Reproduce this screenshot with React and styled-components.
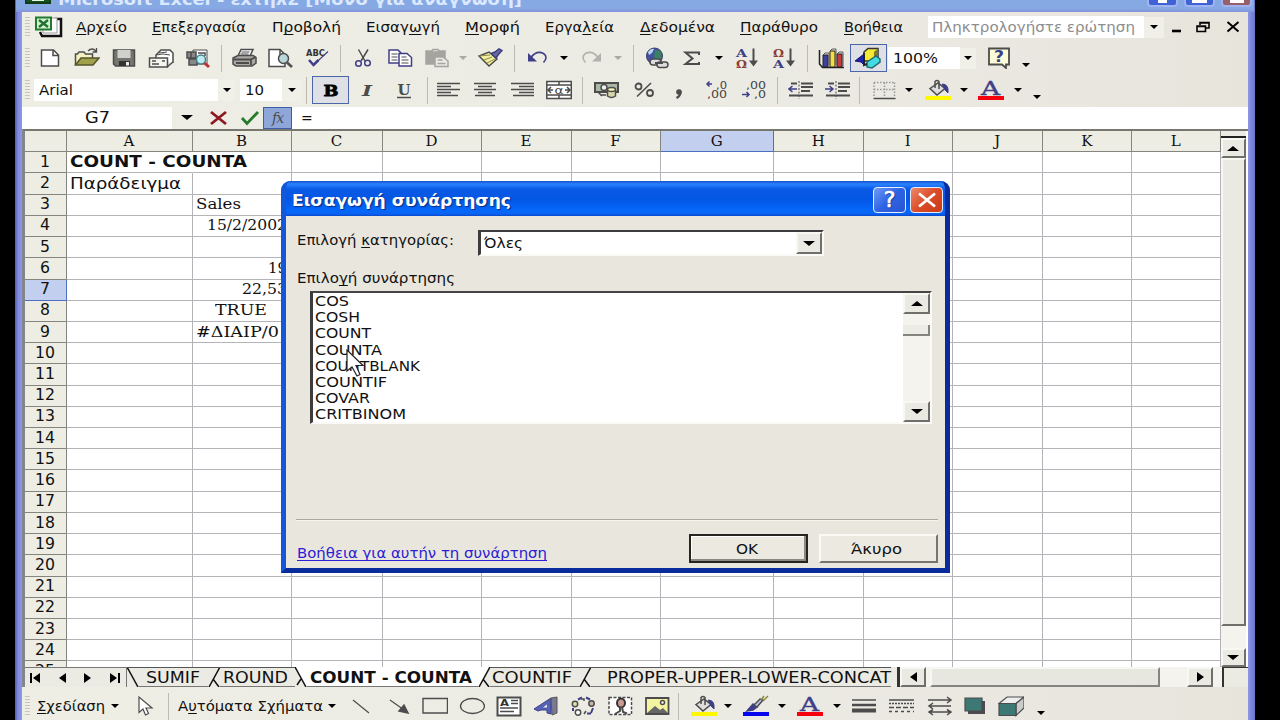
import React, { useLayoutEffect, useRef, useState } from "react";
import styled, { createGlobalStyle } from "styled-components";

const color = {
  face: "#ecebe3",
  faceDark: "#e7e4dc",
  frame: "#7f8cdc",
  ink: "#111",
  grid: "#b4b4b8",
  headLine: "#85857f",
  selected: "#c3cfee",
  selectedLine: "#4c6fc0",
  icon: "#4c4c4c",
  navy: "#3f3f88",
};

const font = {
  ui: `"DejaVu Sans", Verdana, sans-serif`,
  cell: `"DejaVu Serif", serif`,
};

const GlobalStyle = createGlobalStyle`
  body {
    margin: 0;
    background: #000;
    overflow: hidden;
  }
  * {
    box-sizing: border-box;
  }
  u {
    text-decoration-skip-ink: none;
    text-underline-offset: 2px;
  }
`;

/* Stretches a label horizontally so that it fills the given width. */
const FitText = ({ w, children }) => {
  const ref = useRef(null);
  const [scale, setScale] = useState(1);

  useLayoutEffect(() => {
    setScale(w / ref.current.getBoundingClientRect().width);
  }, [w]);

  return (
    <FitBox $w={w}>
      <FitInner ref={ref} style={{ transform: `scaleX(${scale})` }}>
        {children}
      </FitInner>
    </FitBox>
  );
};

const FitBox = styled.span`
  display: inline-block;
  flex: none;
  width: ${(props) => props.$w}px;
  white-space: nowrap;
`;

const FitInner = styled.span`
  display: inline-block;
  transform-origin: 0 50%;
`;

/* ---------- icons ---------- */

const Svg = styled.svg`
  display: block;
  flex: none;
  fill: none;
  stroke: ${color.icon};
  stroke-width: 1.5;
`;

const Icon = ({ children }) => (
  <Svg width="26" height="22" viewBox="0 0 26 22">
    {children}
  </Svg>
);

const glyph = (x, y, size, fill, text, extra) => (
  <text
    x={x}
    y={y}
    fontSize={size}
    fill={fill}
    stroke="none"
    fontFamily={`"DejaVu Sans", sans-serif`}
    lengthAdjust="spacingAndGlyphs"
    {...extra}
  >
    {text}
  </text>
);

const serif = { fontFamily: `"DejaVu Serif", serif` };
const serifBold = { ...serif, fontWeight: 700 };

const bucket = (
  <>
    <path d="M5 9.500 13 4l7 5.500-8 6.500z" fill="#ddd" />
    <path d="M10 9V2.500q2-2 4 0V10" />
    <path d="M17 5q7 0 6 9l-3-3z" fill={color.navy} stroke={color.navy} strokeWidth="1" />
  </>
);

const ICONS = {
  newFile: (
    <Icon>
      <path d="M4.500 3h12l5 5v11h-17z" fill="#fff" />
      <path d="M16 3v5.500h5.500" />
    </Icon>
  ),
  open: (
    <Icon>
      <path d="M1.500 18V7h2l1.500-2h5l1.500 2h7v4" fill="#f4f0c0" />
      <path d="M1.500 18 7 11h18l-6 7z" fill="#a3a04c" stroke="#55552c" />
      <path d="M14 4q4-4 8 0M22.500 1v4h-4" strokeWidth="1.300" />
    </Icon>
  ),
  save: (
    <Icon>
      <path d="M2.500 3h21v16h-19l-2-2z" fill="#757570" />
      <path d="M6.500 3h13v8h-13z" fill="#d0d0cc" stroke="none" />
      <path d="M8 14h11v5H8z" fill="#333" stroke="none" />
      <path d="M15 15h3v3.500h-3z" fill="#eee" stroke="none" />
    </Icon>
  ),
  mail: (
    <Icon>
      <path d="M8 11V8l5-5h9l3 3v10" fill="#fff" />
      <path d="M8 8q7-2 14 0M11 6l8-1" strokeWidth="1" />
      <path d="M1.500 11h18v9h-18z" fill="#f6f6ee" />
      <path d="M4 14h4M4 17h7M14 14h3M19 20l6-5" />
    </Icon>
  ),
  search: (
    <Icon>
      <path d="M8 3h14v14H8z" fill="#fff" strokeWidth="1" />
      <path d="M2 5h9v6H2zM4 12h8v6H4z" fill="#888" />
      <path d="M6 5v6M13 6h7v3" />
      <circle cx="16" cy="12.500" r="4.500" fill="#b9eef3" stroke="#4d7f8c" />
      <path d="m19.500 16 4.500 4" stroke="#c03030" strokeWidth="3" />
    </Icon>
  ),
  print: (
    <Icon>
      <path d="M7 9 10 2.500h12L19 9z" fill="#fff" />
      <path d="M10.500 5h8M9.500 7h8" strokeWidth="1" />
      <path d="M2 11 7 8.500h15l3 2V16l-4 3H5l-3-2z" fill="#aaa9a4" />
      <path d="M2 12.500h18l4.500-2.500M5 16h13M20 12v6" strokeWidth="1.800" />
    </Icon>
  ),
  preview: (
    <Icon>
      <path d="M2 2.500h11l5 5V19.500H2z" fill="#fff" />
      <path d="M13 2.500V8h5" />
      <circle cx="16.500" cy="11.500" r="5" fill="#bbd6da" />
      <path d="m20 15.500 5 4.500" stroke="#555" strokeWidth="2.800" />
    </Icon>
  ),
  spell: (
    <Icon>
      {glyph(2, 8.5, 8, "#333", "ABC", { fontWeight: 700, textLength: 19 })}
      <path d="m5.500 13 4 5L24 4.500" stroke={color.navy} strokeWidth="1.200" />
      <path d="m5 13 4.500 5 5-5" stroke={color.navy} strokeWidth="2.500" />
    </Icon>
  ),
  cut: (
    <Icon>
      <path d="M8.500 2.500 15 14M18 2.500 11 14" />
      <circle cx="8.500" cy="16.500" r="2.800" stroke={color.navy} />
      <circle cx="17.500" cy="16" r="2.800" stroke={color.navy} />
    </Icon>
  ),
  copy: (
    <Icon>
      <path d="M2 3h9l3 3v10H2z" fill="#fff" stroke={color.navy} />
      <path d="M4.500 7h6M4.500 10h6M4.500 13h6" strokeWidth="1.200" />
      <path d="M12 6.500h8l4.500 4V19H12z" fill="#fff" stroke={color.navy} />
      <path d="M14.500 10h5M14.500 13h7M14.500 16h7" strokeWidth="1.200" />
    </Icon>
  ),
  paste: (
    <Icon>
      <path d="M2 4h19v13H2z" fill="#a5a49e" stroke="#a5a49e" />
      <path d="M7 5 9 2.500h5L16 5z" fill="#ddd" stroke="#a5a49e" />
      <path d="M11 10h8l5 4v5.500H11z" fill="#eceae4" stroke="#a5a49e" />
      <path d="M13.500 13h5M13.500 16.500h8" stroke="#a5a49e" />
    </Icon>
  ),
  brush: (
    <Icon>
      <path d="m2 9 10 10 8-7-8-7z" fill="#f3f19a" />
      <path d="m2 9 11-1M7 13l8-3M10 16l8-4" strokeWidth="1" stroke="#8c8a50" />
      <path d="m14 6.500 5 4.500 2-3 4-4.500-3-1.500-4 3z" fill="#6a6a98" stroke={color.navy} />
    </Icon>
  ),
  undo: (
    <Icon>
      <path d="M5.500 11q6-8 13-4.500 5 3.500 0 9" stroke={color.navy} strokeWidth="1.600" />
      <path d="M3 6v8.500h9z" fill={color.navy} stroke="none" />
    </Icon>
  ),
  redo: (
    <Icon>
      <path d="M20.500 11q-6-8-13-4.500-5 3.500 0 9" stroke="#b2b1ab" strokeWidth="1.600" />
      <path d="M23 6v8.500h-9z" fill="#b2b1ab" stroke="none" />
    </Icon>
  ),
  link: (
    <Icon>
      <circle cx="11.500" cy="9" r="8" fill="#4353a2" stroke="#39396b" strokeWidth="1" />
      <path d="m12 3 6 1 1 7-4 2-4-3z" fill="#3c8064" stroke="none" />
      <path d="M5 5q3-4 6-3l-2 4-3 2z" fill="#b8dce9" stroke="none" />
      <rect x="7" y="12" width="11" height="6" rx="3" fill="#ddd" />
      <rect x="14" y="15" width="11" height="5.500" rx="2.700" fill="#ddd" />
      <path d="M12 16h8" strokeWidth="2" />
    </Icon>
  ),
  sum: (
    <Icon>
      <path d="M20 8V5.500H6.500l7 6-7 5.500H20V15" strokeWidth="2" />
    </Icon>
  ),
  sortAsc: (
    <Icon>
      {glyph(2, 10, 11, color.navy, "Α", { ...serifBold, textLength: 11 })}
      {glyph(2, 20.5, 11, "#8d3d38", "Ω", { ...serifBold, textLength: 11 })}
      <path d="M19.500 1.500v15" strokeWidth="2" />
      <path d="M15 13.500h9l-4.500 6z" fill={color.icon} stroke="none" />
    </Icon>
  ),
  sortDesc: (
    <Icon>
      {glyph(2, 10, 11, "#8d3d38", "Ω", { ...serifBold, textLength: 11 })}
      {glyph(2, 20.5, 11, color.navy, "Α", { ...serifBold, textLength: 11 })}
      <path d="M19.500 1.500v15" strokeWidth="2" />
      <path d="M15 13.500h9l-4.500 6z" fill={color.icon} stroke="none" />
    </Icon>
  ),
  chart: (
    <Icon>
      <path d="M1.500 3v14l3 3.500H26" stroke="#222" />
      <path d="M5 8h5v12H5z" fill="#3f3fa2" stroke="#222" strokeWidth="1" />
      <path d="M12 4h5v16h-5z" fill="#f5df46" stroke="#222" strokeWidth="1" />
      <path d="M19 7h5v13h-5z" fill="#c93c40" stroke="#222" strokeWidth="1" />
      <path d="m5 8 2-2h4v12M12 4l2-2h4v16M19 7l2-2h4v14" stroke="#555" strokeWidth="1" />
    </Icon>
  ),
  shapes: (
    <Icon>
      <path d="M9 5 13 1.500h10V11l-4 3H9z" fill="#f4e934" stroke="#333" />
      <path d="M19 14V5l4-3.500V11z" fill="#7e7a25" stroke="none" />
      <path d="M0 14 9 7v11l-3-3z" fill="#1c23b5" stroke="#1a1a60" strokeWidth="1" />
      <path d="m12 15 9-6 4 3v3l-8 6-5-1z" fill="#43dbe2" stroke="#226a70" />
      <path d="M9 6v12l3-1" stroke="#222" strokeWidth="2" />
    </Icon>
  ),
  help: (
    <Icon>
      <path d="M3 1.500h20v16h-3v3.500l-4-3.500H3z" fill="#fdfcd8" strokeWidth="1.800" />
      {glyph(8, 15, 15, color.navy, "?", { fontWeight: 700, textLength: 10 })}
    </Icon>
  ),
  bold: (
    <Icon>
      {glyph(5.5, 16.5, 15, "#000", "B", { ...serifBold, textLength: 15, stroke: "#000", strokeWidth: 0.8 })}
    </Icon>
  ),
  italic: <Icon>{glyph(7, 16.5, 15, color.icon, "I", { ...serifBold, fontStyle: "italic", textLength: 10 })}</Icon>,
  underline: (
    <Icon>
      {glyph(6.5, 15.5, 14, color.icon, "U", { ...serifBold, textLength: 13 })}
      <path d="M6 18.500h14" />
    </Icon>
  ),
  left: <Icon><path d="M2 4.500h23M2 7.500h14M2 10.500h23M2 13.500h14M2 16.500h21" /></Icon>,
  center: <Icon><path d="M2 4.500h22M6 7.500h14M2 10.500h22M6 13.500h14M3 16.500h20" /></Icon>,
  right: <Icon><path d="M2 4.500h23M10 7.500h15M2 10.500h23M10 13.500h15M4 16.500h21" /></Icon>,
  merge: (
    <Icon>
      <path d="M.800 2.500h24.500v17H.800zM.800 6h24.500M.800 16h24.500M13 2v4M13 16v4" fill="#fff" />
      <path d="M7 11H2m3-3-3 3 3 3M19 11h5m-3-3 3 3-3 3" />
      {glyph(8.5, 14.5, 11, "#444", "α", { textLength: 9 })}
    </Icon>
  ),
  currency: (
    <Icon>
      <path d="M2 4h23v9H2z" fill="#aab8a5" strokeWidth="2" />
      <circle cx="11" cy="8.500" r="3" fill="#eee" />
      <path d="M14.500 11v6q4 3 8 0v-6M7 16h6M5 13l4 4" fill="#d8d7a8" />
      <ellipse cx="18.500" cy="10.500" rx="4" ry="2" fill="#f5f3b0" />
    </Icon>
  ),
  percent: (
    <Icon>
      <circle cx="7.500" cy="7.500" r="3" strokeWidth="1.800" />
      <circle cx="19" cy="14" r="3" strokeWidth="1.800" />
      <path d="M20 4 6 17.500" strokeWidth="1.600" />
    </Icon>
  ),
  comma: (
    <Icon>
      <circle cx="13" cy="13" r="2.800" fill={color.icon} stroke="none" />
      <path d="M14.500 13q0 4-4 6" strokeWidth="2.300" />
    </Icon>
  ),
  incDecimal: (
    <Icon>
      <path d="M8 5H3m2.500-2.500L3 5l2.500 2.500" stroke={color.navy} />
      {glyph(12, 9.5, 10, "#444", ",0", { textLength: 11 })}
      {glyph(3, 19, 10, "#444", ",00", { textLength: 20 })}
    </Icon>
  ),
  decDecimal: (
    <Icon>
      {glyph(5, 9.5, 10, "#444", ",00", { textLength: 20 })}
      <path d="M1 15.500h7M5.500 13 8 15.500 5.500 18" stroke={color.navy} />
      {glyph(13, 19, 10, "#444", ",0", { textLength: 12 })}
    </Icon>
  ),
  outdent: (
    <Icon>
      <path d="M13 4.500h12M13 8h12M13 12h9M1 16.500h24M3 4.500h6" strokeWidth="1.800" />
      <path d="M9 10H1m3.500-3L1 10l3.500 3" stroke={color.navy} />
      <path d="M11 2v18" strokeDasharray="2 1.500" strokeWidth="1" />
    </Icon>
  ),
  indent: (
    <Icon>
      <path d="M13 4.500h12M13 8h12M13 12h9M1 16.500h24M3 4.500h6" strokeWidth="1.800" />
      <path d="M0 10h8M4.500 7 8 10l-3.500 3" stroke={color.navy} />
      <path d="M11 2v18" strokeDasharray="2 1.500" strokeWidth="1" />
    </Icon>
  ),
  borders: (
    <Icon>
      <path
        d="M3 3.500h21M3 10.500h21M3 3.500v15M13.500 3.500v15M23.500 3.500v15"
        stroke="#999"
        strokeDasharray="1.500 1.500"
      />
      <path d="M2.500 19.500h22" />
    </Icon>
  ),
  fill: (
    <Icon>
      {bucket}
      <path d="M0 17h26v4H0z" fill="#fdf800" stroke="none" />
    </Icon>
  ),
  fontColor: (
    <Icon>
      {glyph(3, 15.5, 18, color.navy, "A", { ...serif, textLength: 19, stroke: color.navy, strokeWidth: 0.4 })}
      <path d="M0 17h26v4H0z" fill="#f5000c" stroke="none" />
    </Icon>
  ),
  lineColor: (
    <Icon>
      <path d="m4 16 6-7 4 3-4 3z" fill={color.navy} stroke={color.navy} />
      <path d="m11 10 6-6 3 1-6 7z" fill="#bbc3e8" />
      <path d="m18 5 3-4M20 6l5-5" stroke="#8c8a40" />
      <path d="M0 17h26v4H0z" fill="#0505ee" stroke="none" />
    </Icon>
  ),
  pointer: (
    <Icon>
      <path d="M7 2v15.500l4-3.500 2.500 6 3-1.500-2.500-5.500h6z" fill="#fff" strokeWidth="1.200" />
    </Icon>
  ),
  line: <Icon><path d="m5 5 16 13" strokeWidth="1.200" /></Icon>,
  arrow: (
    <Icon>
      <path d="m4 5 12 8.500" strokeWidth="1.200" />
      <path d="m22 18-9-2 5-6z" fill={color.icon} />
    </Icon>
  ),
  rect: <Icon><path d="M1 3.500h24.500v14.500H1z" strokeWidth="1.400" /></Icon>,
  ellipse: <Icon><ellipse cx="13.500" cy="11" rx="12" ry="7.500" strokeWidth="1.300" /></Icon>,
  textbox: (
    <Icon>
      <path d="M1.500 2.500h23v18h-23z" fill="#fff" strokeWidth="2" />
      {glyph(4, 11, 9, "#333", "A", { fontWeight: 700, textLength: 9 })}
      <path d="M15 5.500h7M15 8.500h7M4 13h18M4 16.500h14" strokeWidth="1.300" />
    </Icon>
  ),
  wordart: (
    <Icon>
      <path d="M1 14 18 3v16l-4-1v-3l-6 0-3 1z" fill="#5362b5" stroke={color.navy} strokeWidth="1" />
      <path d="m18 3 6-1V18l-5 2z" fill="#777a90" stroke="#555" strokeWidth="1" />
      <path d="m10 12.500 4-3v3z" fill={color.face} stroke="none" />
    </Icon>
  ),
  diagram: (
    <Icon>
      <circle cx="5" cy="9" r="2.700" fill="#e4e3a7" />
      <circle cx="21.500" cy="8.500" r="2.700" fill="#c8b3a2" />
      <circle cx="8" cy="17.500" r="2.700" fill="#fff" />
      <path d="M8 4.500 12 2.500M16 2.500l4 2M23 13l-2 5M17 18.500h4M3 13v3" stroke={color.navy} strokeWidth="2" />
      <path d="M11 4h3v2M16 16l-2 3" />
    </Icon>
  ),
  clip: (
    <Icon>
      <path d="M2 2.500h22.500v17H2z" fill="#fff" strokeDasharray="3 1.500" />
      <ellipse cx="14" cy="8" rx="4" ry="4.500" fill="#c99a91" stroke="#333" strokeWidth="2" />
      <path d="M13 12v4l-5 3M15 12l1 5 4 1.500" strokeWidth="2" />
    </Icon>
  ),
  image: (
    <Icon>
      <path d="M2 3h22.500v16H2z" fill="#f3f3a2" strokeWidth="1.800" />
      <path d="m3 18 8-7 5 4 3-2 5 5z" fill="#666" stroke="none" />
      <circle cx="18.500" cy="7.500" r="2" fill="#fff" />
    </Icon>
  ),
  lineStyle: (
    <Icon>
      <path d="M1 5h24" />
      <path d="M1 10h24" strokeWidth="2.500" />
      <path d="M1 15.500h24" strokeWidth="4" />
    </Icon>
  ),
  dashStyle: (
    <Icon>
      <path d="M1 5h25" />
      <path d="M1 8.500h25" strokeDasharray="2 1" />
      <path d="M1 12.500h25" strokeDasharray="5 2" />
      <path d="M1 16.500h25" strokeDasharray="3 3" />
    </Icon>
  ),
  arrowStyle: (
    <Icon>
      <path d="M1 5h23m-4-3 4 3-4 3M24 11H2m4-3-4 3 4 3M2 17h22M6 14.500 2 17l4 3M20 14.500l4 2.500-4 3" />
    </Icon>
  ),
  shadow: (
    <Icon>
      <path d="M6 6h17v13H6z" fill="#4b4b50" stroke="none" />
      <path d="M3 3h17v13H3z" fill="#3d7874" strokeWidth="1.200" />
    </Icon>
  ),
  cube: (
    <Icon>
      <path d="M1 8.500 9 2h17l-8 6.500z" fill="#eee" strokeWidth="1.200" />
      <path d="m18 8.500 8-6.500v11l-8 7.500z" fill="#c8cccb" strokeWidth="1.200" />
      <path d="M1 8.500H18v12H1z" fill="#3d7874" strokeWidth="1.200" />
    </Icon>
  ),
};

const Caret = styled.span`
  flex: none;
  width: 0;
  height: 0;
  border: ${(props) => (props.$big ? 6 : 4.5)}px solid transparent;
  border-bottom: none;
  border-top: ${(props) => (props.$big ? 5.5 : 4.5)}px solid ${(props) => (props.$muted ? "#aaa9a2" : "#000")};
  transform: rotate(${(props) => (props.$up ? 180 : 0)}deg);
`;

const SideCaret = styled.span`
  flex: none;
  width: 0;
  height: 0;
  border: 5px solid transparent;
  border-left-width: ${(props) => (props.$left ? 0 : 7)}px;
  border-right-width: ${(props) => (props.$left ? 7 : 0)}px;
  border-left-color: #000;
  border-right-color: #000;
`;

/* ---------- window ---------- */

const Desktop = styled.div`
  width: 1280px;
  height: 720px;
  padding: 0 25px 0 15px;
  overflow: hidden;
  background: #000;
  font-family: ${font.ui};
  font-size: 14px;
  color: ${color.ink};
`;

const Window = styled.div`
  position: relative;
  display: flex;
  flex-direction: column;
  height: 720px;
  padding: 0 7px;
  background: linear-gradient(90deg, #5358ad 0, ${color.frame} 3px, #8b97e8 7px, #8b97e8 1233px, #6d74c8 1240px);
`;

const TitleBar = styled.div`
  display: flex;
  align-items: flex-end;
  flex: none;
  height: 12px;
  margin: 0 -6px;
  padding: 0 2px 0 9px;
  background: linear-gradient(#86a9e4 70%, #8591da);
  color: #dce8ff;
  font-weight: 700;
  font-size: 15px;
`;

const AppTitle = styled.div`
  flex: 1;
  height: 21px;
  padding-left: 7px;
  line-height: 18px;
`;

const AppBadge = styled.div`
  width: 26px;
  height: 12px;
  background: #14551d;
  border: 2px solid #123d18;
  border-top: none;
  margin-bottom: 8px;
`;

const AppBadgeMark = styled.div`
  width: 12px;
  height: 9px;
  margin-left: 5px;
  border-bottom: 3px solid #e8f4e8;
`;

const WindowButton = styled.div`
  width: 31px;
  height: 20px;
  margin: 0 0 5px 6px;
  border: 2px solid #9fb4f0;
  border-radius: 4px;
  display: flex;
  align-items: flex-end;
  justify-content: center;
  padding-bottom: 2px;
  background: ${(props) => (props.$close ? "#985f68" : "#3f63d6")};
`;

const WindowMark = styled.div`
  width: ${(props) => props.$w}px;
  height: 3px;
  background: #fff;
`;

const Bar = styled.div`
  display: flex;
  align-items: center;
  flex: none;
  height: ${(props) => props.$h}px;
  background: linear-gradient(90deg, #efeee5, ${color.face} 60%, ${color.faceDark});
`;

const Grip = styled.div`
  flex: none;
  width: 5px;
  height: 21px;
  margin: 0 ${(props) => props.$after}px 0 3px;
  background: repeating-linear-gradient(#c6c5bd 0 1px, transparent 1px 3px);
`;

const Slot = styled.div`
  display: flex;
  flex: none;
  align-items: center;
  justify-content: center;
  width: ${(props) => props.$w}px;
  height: 26px;
  padding-top: ${(props) => props.$drop || 0}px;
`;

const Separator = styled.div`
  width: 1px;
  height: 27px;
  background: #bcbab2;
`;

const Pressed = styled.div`
  display: flex;
  align-items: center;
  justify-content: center;
  width: 37px;
  height: 28px;
  border: 1.5px solid #4b66ab;
  background: #dfe0e6;
`;

const Combo = styled.div`
  display: flex;
  align-items: center;
  flex: none;
  width: ${(props) => props.$w}px;
  height: 22px;
  padding-left: ${(props) => props.$pad}px;
  margin-left: ${(props) => props.$gap || 0}px;
  background: #fff;
  color: ${(props) => props.$ink || color.ink};
`;

const ComboArrow = styled.div`
  display: flex;
  align-items: center;
  justify-content: center;
  flex: none;
  width: ${(props) => props.$w}px;
  height: 21px;
  background: #f0efe8;
`;

const MenuItem = styled.div`
  flex: none;
  margin-right: ${(props) => props.$after}px;
  line-height: 20px;
`;

const DocButton = styled.div`
  display: flex;
  justify-content: center;
  flex: none;
  width: ${(props) => props.$w}px;
`;

const Tools = ({ items }) =>
  items.map(([name, w], i) => {
    if (name === "sep") return <Slot key={i} $w={w}><Separator /></Slot>;
    if (name === "caret") return <Slot key={i} $w={w}><Caret /></Slot>;
    if (name === "caretOff") return <Slot key={i} $w={w}><Caret $muted /></Slot>;
    if (name === "more") return <Slot key={i} $w={w} $drop={13}><Caret /></Slot>;
    if (name === "bold" || name === "shapes") {
      return <Slot key={i} $w={w}><Pressed>{ICONS[name]}</Pressed></Slot>;
    }
    return <Slot key={i} $w={w}>{ICONS[name]}</Slot>;
  });

const MENU = [
  ["", "Α", "ρχείο", 51, 25],
  ["", "Ε", "πεξεργασία", 94, 26],
  ["Π", "ρ", "οβολή", 69, 25],
  ["Εισαγ", "ω", "γή", 74, 25],
  ["", "Μ", "ορφή", 55, 25],
  ["Εργα", "λ", "εία", 69, 26],
  ["", "Δ", "εδομένα", 75, 25],
  ["", "Π", "αράθυρο", 78, 26],
  ["", "Β", "οήθεια", 59, 25],
];

const STANDARD = [
  ["newFile", 36], ["open", 37], ["save", 37], ["mail", 37], ["search", 38], ["sep", 8],
  ["print", 37], ["preview", 36], ["spell", 37], ["sep", 10],
  ["cut", 36], ["copy", 37], ["paste", 38], ["caretOff", 14], ["brush", 40], ["sep", 8],
  ["undo", 39], ["caret", 14], ["redo", 40], ["caretOff", 14], ["sep", 16],
  ["link", 30], ["sum", 41], ["caret", 14], ["sortAsc", 42], ["sortDesc", 32], ["sep", 14],
  ["chart", 34], ["shapes", 40],
];

const FORMATTING = [
  ["sep", 10], ["bold", 39], ["italic", 35], ["underline", 38], ["sep", 9],
  ["left", 31], ["center", 43], ["right", 31], ["merge", 44], ["sep", 3],
  ["currency", 43], ["percent", 33], ["comma", 37], ["incDecimal", 39], ["decDecimal", 36], ["sep", 10],
  ["outdent", 37], ["indent", 37], ["sep", 7], ["borders", 41], ["caret", 9],
  ["fill", 49], ["caret", 3], ["fontColor", 51], ["caret", 3], ["more", 35],
];

const DRAWING = [
  ["caret", 20], ["pointer", 40], ["sep", 6],
];

const SHAPES = [
  ["caret", 18], ["line", 39], ["arrow", 38], ["rect", 33], ["ellipse", 41], ["textbox", 33], ["wordart", 41],
  ["diagram", 33], ["clip", 41], ["image", 33], ["sep", 10], ["fill", 41], ["caret", 7],
  ["lineColor", 49], ["caret", 3], ["fontColor", 53], ["caret", 1], ["lineStyle", 53],
  ["dashStyle", 21], ["arrowStyle", 57], ["shadow", 13], ["cube", 59], ["more", 2],
];

const ExcelLogo = () => (
  <Svg width="28" height="22" viewBox="0 0 28 22">
    <path d="M20 3h6v17H7l-2-4" fill="#fff" stroke="#111" strokeWidth="2.500" />
    <path d="M8 2h14v15H8z" fill="#fff" stroke="#999" strokeWidth="1" />
    <path d="M1 1.500h15v12H1z" fill="#d8efd6" stroke="#207a2c" strokeWidth="2" />
    <path d="m4 4 9 7M13 4l-9 7" stroke="#1d742c" strokeWidth="2.400" />
  </Svg>
);

const MenuBar = () => (
  <Bar $h={30}>
    <Grip $after={5} />
    <ExcelLogo />
    <MenuItem $after={13} />
    {MENU.map(([before, key, after, w, gap]) => (
      <MenuItem key={after} $after={gap}>
        <FitText w={w}>{before}<u>{key}</u>{after}</FitText>
      </MenuItem>
    ))}
    <Combo $w={216} $pad={4} $ink="#8e8e8e">
      <FitText w={203}>Πληκτρολογήστε ερώτηση</FitText>
    </Combo>
    <ComboArrow $w={20}><Caret /></ComboArrow>
    <DocButton $w={26}>
      <Svg width="12" height="12" viewBox="0 0 12 12"><path d="M1 10h9" stroke="#000" strokeWidth="2.600" /></Svg>
    </DocButton>
    <DocButton $w={26}>
      <Svg width="14" height="12" viewBox="0 0 14 12">
        <path d="M4 4V1.500h9v5.500h-3M1 5h8.500v5.500H1zM4 2h9M1 5.500h8.500" stroke="#000" strokeWidth="1.600" />
      </Svg>
    </DocButton>
    <DocButton $w={34}>
      <Svg width="14" height="12" viewBox="0 0 14 12"><path d="m1.500 1 11 9.500M12.500 1l-11 9.500" stroke="#000" strokeWidth="2" /></Svg>
    </DocButton>
  </Bar>
);

/* ---------- formula bar ---------- */

const NameBox = styled.div`
  flex: none;
  width: 150px;
  height: 22px;
  padding-left: 63px;
  line-height: 22px;
  font-size: 15px;
  background: #fff;
`;

const FormulaField = styled.div`
  flex: 1;
  height: 22px;
  padding-left: 9px;
  line-height: 23px;
  background: #fff;
`;

const FxButton = styled.div`
  display: flex;
  align-items: center;
  justify-content: center;
  width: 29px;
  height: 22px;
  border: 1px solid #3c5da8;
  background: #8fa6d8;
  color: #4b4b55;
  font: italic 14px ${font.cell};
  letter-spacing: -1px;
`;

const FormulaBar = () => (
  <Bar $h={23}>
    <NameBox><FitText w={25}>G7</FitText></NameBox>
    <Slot $w={30}><Caret $big /></Slot>
    <Slot $w={34}>
      <Svg width="20" height="16" viewBox="0 0 20 16"><path d="m2 2 15 12M17 2 2 14" stroke="#8d1a22" strokeWidth="2.800" /></Svg>
    </Slot>
    <Slot $w={27}>
      <Svg width="20" height="16" viewBox="0 0 20 16"><path d="m2 8 5 5.500L18 2" stroke="#257a2b" strokeWidth="2.800" /></Svg>
    </Slot>
    <FxButton>fx</FxButton>
    <FormulaField>=</FormulaField>
  </Bar>
);

/* ---------- sheet ---------- */

const Sheet = styled.div`
  display: flex;
  flex: none;
  height: 538px;
  border-left: 3px solid #85858c;
  border-top: 2px solid #777770;
  background: #fff;
  overflow: hidden;
`;

const Grid = styled.div`
  display: grid;
  flex: none;
  width: 1195.500px;
  overflow: hidden;
  grid-template-columns: 41.500px 126px 99px 91px 99px 90px 89px 113.500px 89.500px 89.500px 89.500px 89.500px 88.500px;
  grid-template-rows: 21.200px repeat(25, 21.220px);
`;

const Head = styled.div`
  display: flex;
  align-items: center;
  justify-content: center;
  min-width: 0;
  border-right: 1px solid ${(props) => (props.$on ? color.selectedLine : color.headLine)};
  border-bottom: 1px solid ${(props) => (props.$on ? color.selectedLine : color.headLine)};
  background: ${(props) => (props.$on ? color.selected : "#edede4")};
  font-family: ${(props) => (props.$serif ? font.cell : font.ui)};
  font-size: 15px;
  line-height: 1;
`;

const Cell = styled.div`
  display: flex;
  align-items: center;
  justify-content: ${(props) => props.$align || "flex-start"};
  min-width: 0;
  padding: 0 4px 0 3px;
  border-right: 1px solid ${(props) => (props.$open ? "transparent" : color.grid)};
  border-bottom: 1px solid ${color.grid};
  font-family: ${(props) => (props.$sans ? font.ui : font.cell)};
  font-weight: ${(props) => (props.$bold ? 700 : 400)};
  font-size: ${(props) => (props.$sans ? 16 : 15)}px;
  line-height: 1;
  white-space: nowrap;
`;

const COLUMNS = ["A", "B", "C", "D", "E", "F", "G", "H", "I", "J", "K", "L"];

const CELLS = {
  A1: { text: "COUNT - COUNTA", w: 177, sans: true, bold: true, open: true },
  A2: { text: "Παράδειγμα", w: 111, sans: true },
  B3: { text: "Sales", w: 45 },
  B4: { text: "15/2/2002", w: 80, align: "flex-end" },
  B6: { text: "19", w: 19, align: "flex-end" },
  B7: { text: "22,53", w: 45, align: "flex-end" },
  B8: { text: "TRUE", w: 52, align: "center" },
  B9: { text: "#ΔΙΑΙΡ/0!", w: 90, align: "center" },
};

const SheetGrid = () => (
  <Grid>
    <Head />
    {COLUMNS.map((name) => (
      <Head key={name} $serif $on={name === "G"}>{name}</Head>
    ))}
    {Array.from({ length: 25 }, (_, i) => i + 1).map((row) => (
      <React.Fragment key={row}>
        <Head $on={row === 7}>
          <FitText w={row > 9 ? 20 : 10}>{row}</FitText>
        </Head>
        {COLUMNS.map((name) => {
          const cell = CELLS[name + row] || {};
          return (
            <Cell key={name} $align={cell.align} $sans={cell.sans} $bold={cell.bold} $open={cell.open}>
              {cell.text && <FitText w={cell.w}>{cell.text}</FitText>}
            </Cell>
          );
        })}
      </React.Fragment>
    ))}
  </Grid>
);

const VScroll = styled.div`
  display: flex;
  flex-direction: column;
  width: 25px;
  background: #f4f3ee;
`;

const SplitBox = styled.div`
  height: 7px;
  background: ${color.face};
  border-bottom: 2px solid #222;
`;

const ScrollButton = styled.div`
  display: flex;
  flex: none;
  align-items: center;
  justify-content: center;
  width: ${(props) => props.$w}px;
  height: ${(props) => props.$h}px;
  border: 2px solid #6f6f6b;
  border-top-color: #f8f8f2;
  border-left-color: #f8f8f2;
  background: #ebeae2;
`;

const Spacer = styled.div`
  flex: 1;
`;

/* ---------- sheet tabs ---------- */

const TabRow = styled.div`
  display: flex;
  flex: none;
  height: 20px;
  border-left: 3px solid #85858c;
  background: ${color.face};
`;

const TabNav = styled.div`
  display: flex;
  align-items: center;
  flex: none;
  width: 102px;
  border-right: 1px solid #777;
  border-top: 1px solid #777;
`;

const NavStop = styled.span`
  width: 2px;
  height: 10px;
  margin: ${(props) => props.$m};
  background: #000;
`;

const NavGap = styled.span`
  width: ${(props) => props.$w}px;
`;

const Tab = styled.div`
  flex: none;
  border-top: 1px solid ${(props) => (props.$active ? "#fff" : "#555")};
  border-bottom: 1px solid #777;
  background: ${(props) => (props.$active ? "#fff" : color.face)};
  font-weight: ${(props) => (props.$active ? 700 : 400)};
  font-size: 15px;
  line-height: 20px;
  height: 20px;
  padding: 0 ${(props) => props.$r || 0}px 0 ${(props) => props.$l || 0}px;
`;

const TabEdge = ({ kind, leftFill, rightFill }) => (
  <Svg width="12" height="20" viewBox="0 0 12 20">
    <path d="M0 0h12v20H0z" fill={leftFill} stroke="none" />
    {kind === "down" ? (
      <>
        <path d="M0 0h12v20h-1z" fill={rightFill} stroke="none" />
        <path d="m0 0 11 20" stroke="#111" />
        {leftFill !== rightFill && <path d="m2 18 4-6" stroke="#111" />}
      </>
    ) : (
      <>
        <path d="M12 0v20H1z" fill={rightFill} stroke="none" />
        <path d="M12 0 1 20M5 12l6 8" stroke="#111" />
      </>
    )}
    {(kind === "down" ? rightFill : leftFill) === color.face && <path d="M0 .500h12" stroke="#555" strokeWidth="1" />}
  </Svg>
);

const HScroll = styled.div`
  display: flex;
  flex: 1;
  margin-left: 6px;
  border-left: 3px solid #333;
  background: #f4f3ee;
`;

const HThumb = styled.div`
  width: 230px;
  margin-left: 4px;
  border: 2px solid #85857f;
  border-top-color: #f8f8f2;
  border-left-color: #f8f8f2;
  background: #e8e7df;
`;

const Corner = styled.div`
  width: 26px;
  margin-left: 9px;
  border-left: 2px solid #333;
  border-top: 1px solid #333;
  background: ${color.face};
`;

const TabStrip = () => (
  <TabRow>
    <TabNav>
      <NavStop $m="0 1px 0 5px" />
      <SideCaret $left />
      <NavGap $w={19} />
      <SideCaret $left />
      <NavGap $w={18} />
      <SideCaret />
      <NavGap $w={19} />
      <SideCaret />
      <NavStop $m="0 0 0 1px" />
    </TabNav>
    <TabEdge kind="down" leftFill={color.face} rightFill={color.face} />
    <Tab $l={7} $r={8}><FitText w={54}>SUMIF</FitText></Tab>
    <TabEdge kind="up" leftFill={color.face} rightFill={color.face} />
    <Tab $l={3} $r={7}><FitText w={65}>ROUND</FitText></Tab>
    <TabEdge kind="down" leftFill={color.face} rightFill="#fff" />
    <Tab $active $l={3} $r={6}><FitText w={162}>COUNT - COUNTA</FitText></Tab>
    <TabEdge kind="up" leftFill="#fff" rightFill={color.face} />
    <Tab $l={2} $r={7}><FitText w={80}>COUNTIF</FitText></Tab>
    <TabEdge kind="up" leftFill={color.face} rightFill={color.face} />
    <Tab $l={16}><FitText w={284}>PROPER-UPPER-LOWER-CONCAT</FitText></Tab>
    <HScroll>
      <ScrollButton $w={26} $h={20}><SideCaret $left /></ScrollButton>
      <HThumb />
      <Spacer />
      <ScrollButton $w={26} $h={20}><SideCaret /></ScrollButton>
      <Corner />
    </HScroll>
  </TabRow>
);

/* ---------- insert function dialog ---------- */

const Dialog = styled.div`
  position: absolute;
  left: 266px;
  top: 181px;
  width: 669px;
  height: 392px;
  display: flex;
  flex-direction: column;
  border: 5px solid #0c3fc4;
  border-color: #0c56de #0a2b9c #0a2b9c #1457d8;
  border-top: none;
  border-radius: 9px 9px 0 0;
  background: #0054e3;
  overflow: hidden;
`;

const DialogTitle = styled.div`
  display: flex;
  align-items: center;
  flex: none;
  height: 35px;
  margin: 0 -5px;
  padding: 3px 7px 0 11px;
  background: linear-gradient(#1250c8 0, #2a83ff 3px, #0a5ae6 8px, #0456e4 18px, #0468fb 29px, #0a62f2 33px, #0748c8);
  color: #fff;
  font-weight: 700;
  font-size: 16px;
  text-shadow: 1px 1px 1px #0a2f8c;
`;

const TitleButton = styled.div`
  display: flex;
  align-items: center;
  justify-content: center;
  width: 33px;
  height: 26px;
  margin-left: 4px;
  border: 1.5px solid #e8eeff;
  border-radius: 4px;
  background: ${(props) =>
    props.$close
      ? "linear-gradient(135deg, #eb8a6a, #dc4c28 50%, #c93a17)"
      : "linear-gradient(135deg, #6f9bf6, #2e63e4 50%, #2a55cf)"};
`;

const QuestionMark = styled.span`
  font-size: 22px;
  font-weight: 400;
  line-height: 1;
  -webkit-text-stroke: 0.7px #fff;
`;

const DialogBody = styled.div`
  flex: 1;
  display: flex;
  flex-direction: column;
  padding: 14px 7px 5px 10px;
  background: #e9e6de;
`;

const Field = styled.div`
  display: flex;
  align-items: flex-start;
  height: 38px;
`;

const FieldLabel = styled.div`
  width: 182px;
  padding-left: 1px;
  line-height: 20px;
`;

const Select = styled.div`
  display: flex;
  width: 346px;
  height: 26px;
  border: 2px solid #fbfaf6;
  border-top: 2px solid #3c3c3c;
  border-left: 3px solid #3c3c3c;
  padding-left: 3px;
  background: #fff;
  line-height: 23px;
`;

const ListBox = styled.div`
  display: flex;
  flex: none;
  width: 622px;
  height: 133px;
  margin: 3px 0 0 14px;
  border: 2px solid #fbfaf6;
  border-top: 2px solid #454545;
  border-left: 3px solid #3c3c3c;
  background: #fff;
`;

const Options = styled.div`
  flex: 1;
  padding-left: 2px;
`;

const Option = styled.div`
  height: 16.200px;
  line-height: 17px;
  font-size: 13.500px;
`;

const ListScroll = styled.div`
  display: flex;
  flex-direction: column;
  width: 27px;
  background: #f4f3ee;
`;

const ListThumb = styled.div`
  height: 11px;
  margin-top: 11px;
  border: 2px solid #85857f;
  border-top: none;
  border-left: none;
  background: #ecebe4;
`;

const Rule = styled.div`
  height: 2px;
  margin-top: 95px;
  border-top: 1px solid #aba89d;
  border-bottom: 1px solid #f6f5ee;
`;

const Footer = styled.div`
  display: flex;
  align-items: flex-start;
  padding-top: 13px;
`;

const HelpLink = styled.div`
  flex: none;
  width: 393px;
  padding: 9px 0 0 1px;
  color: #2b20d4;
  line-height: 20px;
`;

const Button = styled.div`
  display: flex;
  flex: none;
  align-items: center;
  justify-content: center;
  width: 119px;
  height: 29px;
  margin-right: ${(props) => (props.$primary ? 11 : 0)}px;
  padding-right: 4px;
  border: 2px solid #77756f;
  border-color: ${(props) => (props.$primary ? "#26241f" : "#fbfaf4 #77756f #77756f #fbfaf4")};
  box-shadow: ${(props) => (props.$primary ? "inset -2px -2px #8b8983, inset 1px 1px #fff" : "none")};
  background: #ebe9e0;
  font-size: 14px;
`;

const Pointer = styled.svg`
  position: absolute;
  left: 60px;
  top: 168px;
`;

const FUNCTIONS = [
  ["COS", 34],
  ["COSH", 45],
  ["COUNT", 56],
  ["COUNTA", 67],
  ["COUNTBLANK", 105],
  ["COUNTIF", 72],
  ["COVAR", 55],
  ["CRITBINOM", 91],
];

const InsertFunctionDialog = () => (
  <Dialog>
    <DialogTitle>
      <FitText w={219}>Εισαγωγή συνάρτησης</FitText>
      <Spacer />
      <TitleButton><QuestionMark>?</QuestionMark></TitleButton>
      <TitleButton $close>
        <Svg width="20" height="16" viewBox="0 0 20 16"><path d="m2 1.500 16 13M18 1.500l-16 13" stroke="#fff" strokeWidth="2.800" /></Svg>
      </TitleButton>
    </DialogTitle>
    <DialogBody>
      <Field>
        <FieldLabel><FitText w={157}>Επιλογή <u>κ</u>ατηγορίας:</FitText></FieldLabel>
        <Select>
          <FitText w={39}>Όλες</FitText>
          <Spacer />
          <ScrollButton $w={26} $h={22}><Caret $big /></ScrollButton>
        </Select>
      </Field>
      <FieldLabel><FitText w={158}>Επιλο<u>γ</u>ή συνάρτησης</FitText></FieldLabel>
      <ListBox>
        <Options>
          {FUNCTIONS.map(([name, w]) => (
            <Option key={name}><FitText w={w}>{name}</FitText></Option>
          ))}
        </Options>
        <ListScroll>
          <ScrollButton $w={27} $h={21}><Caret $up $big /></ScrollButton>
          <ListThumb />
          <Spacer />
          <ScrollButton $w={27} $h={21}><Caret $big /></ScrollButton>
        </ListScroll>
      </ListBox>
      <Rule />
      <Footer>
        <HelpLink><FitText w={250}><u>Βοήθεια για αυτήν τη συνάρτηση</u></FitText></HelpLink>
        <Button $primary><FitText w={22}>OK</FitText></Button>
        <Button><FitText w={51}>Άκυρο</FitText></Button>
      </Footer>
    </DialogBody>
    <Pointer width="20" height="30" viewBox="0 0 20 30">
      <path d="M1 1v21l5-4 5 9 3-1.500-4-9h7z" fill="#fff" stroke="#222" strokeWidth="1.200" />
    </Pointer>
  </Dialog>
);

/* ---------- app ---------- */

const App = () => (
  <Desktop>
    <GlobalStyle />
    <Window>
      <TitleBar>
        <AppBadge><AppBadgeMark /></AppBadge>
        <AppTitle><FitText w={464}>Microsoft Excel - εxτηλΣ [Μόνο για ανάγνωση]</FitText></AppTitle>
        <WindowButton><WindowMark $w={9} /></WindowButton>
        <WindowButton><WindowMark $w={15} /></WindowButton>
        <WindowButton $close><WindowMark $w={14} /></WindowButton>
      </TitleBar>
      <MenuBar />
      <Bar $h={32}>
        <Grip $after={2} />
        <Tools items={STANDARD} />
        <Combo $w={72} $pad={5}><FitText w={45}>100%</FitText></Combo>
        <ComboArrow $w={16}><Caret /></ComboArrow>
        <Tools items={[["help", 46], ["more", 8]]} />
      </Bar>
      <Bar $h={32}>
        <Grip $after={4} />
        <Combo $w={184} $pad={5}><FitText w={34}>Arial</FitText></Combo>
        <ComboArrow $w={17}><Caret /></ComboArrow>
        <Combo $w={42} $pad={5} $gap={5}><FitText w={19}>10</FitText></Combo>
        <ComboArrow $w={19}><Caret /></ComboArrow>
        <Tools items={FORMATTING} />
      </Bar>
      <FormulaBar />
      <Sheet>
        <SheetGrid />
        <VScroll>
          <SplitBox />
          <ScrollButton $w={25} $h={20}><Caret $up $big /></ScrollButton>
          <ScrollButton $w={25} $h={468} />
          <Spacer />
          <ScrollButton $w={25} $h={19}><Caret $big /></ScrollButton>
        </VScroll>
      </Sheet>
      <TabStrip />
      <Bar $h={2} />
      <Bar $h={34}>
        <Grip $after={7} />
        <FitText w={68}><u>Σ</u>χεδίαση</FitText>
        <Tools items={DRAWING} />
        <NavGap $w={7} />
        <FitText w={145}>Α<u>υ</u>τόματα Σχήματα</FitText>
        <Tools items={SHAPES} />
      </Bar>
      <InsertFunctionDialog />
    </Window>
  </Desktop>
);

export default App;
